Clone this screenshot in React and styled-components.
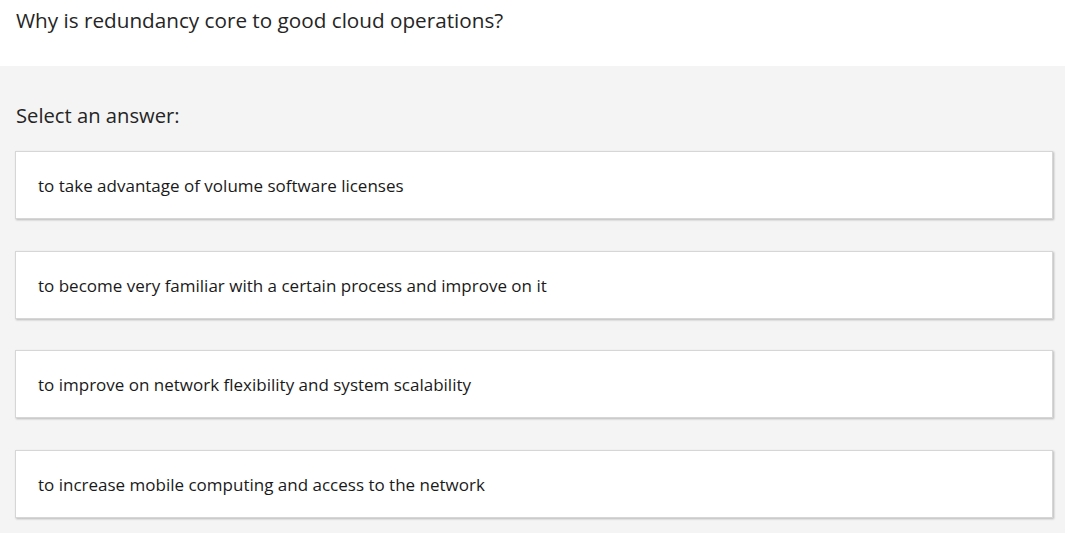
import React from "react";
import styled, { createGlobalStyle } from "styled-components";

const Global = createGlobalStyle`
  html, body { margin: 0; padding: 0; background: #f4f4f4; }
  body { font-family: "Open Sans", "Noto Sans", sans-serif; color: #222; }
`;

const Page = styled.div`
  display: flex;
  flex-direction: column;
  min-height: 533px;
`;

const Header = styled.header`
  background: #ffffff;
  height: 66px;
  box-sizing: border-box;
  padding: 6px 16px 0;
`;

const Question = styled.h1`
  margin: 0;
  font-size: 20.7px;
  font-weight: 400;
  line-height: 28px;
  color: #252525;
`;

const Body = styled.main`
  background: #f4f4f4;
  padding: 35px 12px 0 15px;
  display: flex;
  flex-direction: column;
`;

const Prompt = styled.h2`
  margin: 0 0 22px 1px;
  font-size: 20.2px;
  font-weight: 400;
  line-height: 28px;
  color: #252525;
`;

const Options = styled.div`
  display: flex;
  flex-direction: column;
  gap: 31.67px;
`;

const Option = styled.button`
  display: flex;
  align-items: center;
  height: 68px;
  box-sizing: border-box;
  padding: 0 22px 0 22px;
  background: #fff;
  border: 1px solid #d6d6d6;
  box-shadow: 1px 1px 2px rgba(0, 0, 0, 0.25);
  font-family: inherit;
  font-size: 17px;
  line-height: 24px;
  color: #1a1a1a;
  text-align: left;
  cursor: pointer;
  padding-top: 2px;
`;

const answers = [
  "to take advantage of volume software licenses",
  "to become very familiar with a certain process and improve on it",
  "to improve on network flexibility and system scalability",
  "to increase mobile computing and access to the network",
];

export default function App() {
  return (
    <Page>
      <Global />
      <Header>
        <Question>Why is redundancy core to good cloud operations?</Question>
      </Header>
      <Body>
        <Prompt>Select an answer:</Prompt>
        <Options>
          {answers.map((a) => (
            <Option key={a}>{a}</Option>
          ))}
        </Options>
      </Body>
    </Page>
  );
}
